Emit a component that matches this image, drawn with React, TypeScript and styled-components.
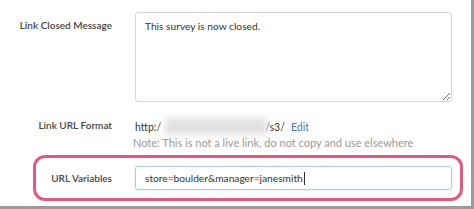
import React from "react";
import styled, { createGlobalStyle } from "styled-components";

const Global = createGlobalStyle`
  html, body { margin: 0; padding: 0; background: #fff; }
  body { font-family: Lato, "Open Sans", sans-serif; }
`;

const Frame = styled.div`
  width: 474px;
  height: 209px;
  box-sizing: border-box;
  border-right: 3px solid #9b9b9b;
  border-bottom: 3px solid #9b9b9b;
  background: #fff;
  overflow: hidden;
  display: flex;
  flex-direction: column;
  padding-top: 12px;
`;

const Row = styled.div<{ $mt?: number }>`
  display: grid;
  grid-template-columns: 112px 317px;
  column-gap: 23px;
  margin-top: ${(p) => p.$mt ?? 0}px;
`;

const Label = styled.div<{ $pt?: number }>`
  text-align: right;
  font-size: 10px;
  font-weight: 600;
  color: #444;
  padding-top: ${(p) => p.$pt ?? 0}px;
  line-height: 14px;
  white-space: nowrap;
`;

const TextArea = styled.textarea`
  box-sizing: border-box;
  width: 317px;
  height: 90px;
  border: 1px solid #d6d6d6;
  border-radius: 3px;
  padding: 6px 9px;
  font-family: Lato, "Open Sans", sans-serif;
  font-size: 10.2px;
  line-height: 14px;
  color: #333;
  resize: vertical;
  outline: none;
  margin: 0;
  display: block;
`;

const Value = styled.div`
  display: flex;
  flex-direction: column;
  gap: 1px;
`;

const UrlLine = styled.div`
  display: flex;
  align-items: center;
  font-size: 10.5px;
  line-height: 14px;
  color: #333;
  white-space: nowrap;
`;

const Blur = styled.span`
  display: inline-block;
  width: 102px;
  height: 17px;
  margin: 0 -2px 0 4px;
  background: #e2e2e2;
  filter: blur(3px);
`;

const EditLink = styled.a`
  color: #3b79c4;
  margin-left: 6px;
  text-decoration: none;
`;

const Note = styled.div`
  font-size: 11px;
  line-height: 14px;
  color: #9a9a9a;
  white-space: nowrap;
  margin-left: -2px;
`;

const Highlight = styled.div`
  margin: 5px 8px 0 33px;
  height: 46px;
  box-sizing: border-box;
  border: 3px solid #e25b7d;
  border-radius: 12px;
  display: grid;
  grid-template-columns: 76px 317px;
  column-gap: 23px;
  align-items: center;
`;

const Input = styled.div`
  box-sizing: border-box;
  height: 24px;
  border: 1px solid #a9d0e8;
  border-radius: 3px;
  box-shadow: 0 0 2px rgba(120, 180, 220, 0.5);
  padding: 0 9px;
  display: flex;
  align-items: center;
  font-size: 10.2px;
  color: #333;
`;

const Caret = styled.span`
  display: inline-block;
  width: 1px;
  height: 13px;
  background: #333;
  margin-left: 1px;
`;

export default function App() {
  return (
    <>
      <Global />
      <Frame>
        <Row>
          <Label $pt={6}>Link Closed Message</Label>
          <TextArea defaultValue="This survey is now closed." />
        </Row>
        <Row $mt={16}>
          <Label>Link URL Format</Label>
          <Value>
            <UrlLine>
              http:/<Blur />/s3/<EditLink href="#">Edit</EditLink>
            </UrlLine>
            <Note>Note: This is not a live link, do not copy and use elsewhere</Note>
          </Value>
        </Row>
        <Highlight>
          <Label>URL Variables</Label>
          <Input>
            store=boulder&amp;manager=janesmith
            <Caret />
          </Input>
        </Highlight>
      </Frame>
    </>
  );
}
